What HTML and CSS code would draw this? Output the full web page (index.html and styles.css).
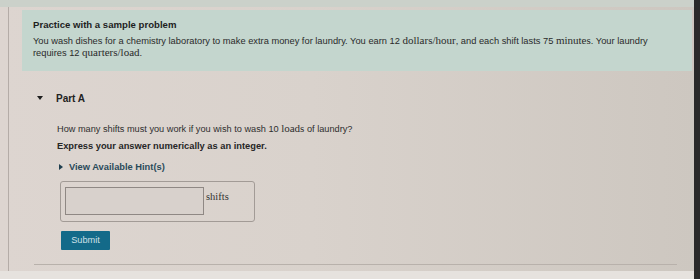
FILE: index.html
```html
<!DOCTYPE html>
<html>
<head>
<meta charset="utf-8">
<link rel="stylesheet" href="styles.css">
</head>
<body>
<div class="screen">
  <div class="topstrip"></div>
  <div class="page">
    <div class="intro">
      <div class="intro-title">Practice with a sample problem</div>
      <div class="intro-text">You wash dishes for a chemistry laboratory to make extra money for laundry. You earn 12 <span class="m">dollars/hour</span>, and each shift lasts 75 <span class="m">minutes</span>. Your laundry<br>requires 12 <span class="m">quarters/load</span>.</div>
    </div>
    <div class="part">
      <div class="part-head"><span class="caret-down"></span><span class="part-title">Part A</span></div>
      <div class="part-body">
        <p class="q">How many shifts must you work if you wish to wash 10 <span class="m">loads</span> of laundry?</p>
        <p class="instr">Express your answer numerically as an integer.</p>
        <div class="hint"><span class="caret-right"></span>View Available Hint(s)</div>
        <div class="answer">
          <div class="input"></div>
          <span class="unit">shifts</span>
        </div>
        <div class="submit">Submit</div>
      </div>
    </div>
    <div class="rule"></div>
  </div>
  <div class="bottomstrip"></div>
</div>
</body>
</html>
```
FILE: styles.css
```css
html, body {
  margin: 0;
  padding: 0;
  width: 700px;
  height: 279px;
  overflow: hidden;
  background: #2a2a2a;
  font-family: "Liberation Sans", Arial, sans-serif;
  color: #232323;
}
.screen {
  width: 694px;
  height: 279px;
  display: flex;
  flex-direction: column;
  background: linear-gradient(90deg, #ddd5d0 0%, #d9d2cc 45%, #cdc7c0 100%);
}
.topstrip {
  height: 7px;
  background: #cbd1ca;
  flex: none;
}
.page {
  flex: 1;
  margin-left: 8px;
  border-left: 1px solid #b4aca7;
  padding: 3px 2px 0 13px;
  display: flex;
  flex-direction: column;
}
.intro {
  background: #c4d6ce;
  height: 61px;
  box-sizing: border-box;
  padding: 9px 11px 0 11px;
}
.intro-title {
  font-weight: bold;
  font-size: 9.6px;
  line-height: 12px;
  color: #1e1e1e;
}
.intro-text {
  margin-top: 4px;
  font-size: 9.3px;
  line-height: 11px;
  color: #2a2a2a;
}
.m {
  font-family: "Liberation Serif", "Times New Roman", serif;
  font-size: 11px;
}
.part {
  padding-top: 20px;
}
.part-head {
  display: flex;
  align-items: center;
  height: 14px;
}
.caret-down {
  width: 0;
  height: 0;
  border-left: 3.5px solid transparent;
  border-right: 3.5px solid transparent;
  border-top: 4px solid #1e1e1e;
  margin-left: 15px;
  margin-right: 13px;
}
.part-title {
  font-weight: bold;
  font-size: 10px;
  color: #222;
}
.part-body {
  padding-left: 35px;
}
.q {
  margin: 17px 0 0 0;
  font-size: 9.2px;
  line-height: 12px;
  color: #2e2e2e;
}
.instr {
  margin: 5px 0 0 0;
  font-size: 9.3px;
  line-height: 12px;
  font-weight: bold;
  color: #262626;
}
.hint {
  margin-top: 9px;
  display: flex;
  align-items: center;
  font-size: 9.3px;
  line-height: 12px;
  font-weight: bold;
  color: #2a4a5a;
}
.caret-right {
  width: 0;
  height: 0;
  border-top: 3.5px solid transparent;
  border-bottom: 3.5px solid transparent;
  border-left: 4px solid #1f3f4f;
  margin: 0 6px 0 2px;
}
.answer {
  margin-top: 8px;
  margin-left: 3px;
  width: 195px;
  height: 41px;
  box-sizing: border-box;
  border: 1px solid #a29b96;
  border-radius: 3px;
  display: flex;
  align-items: flex-start;
  padding: 5px 0 0 4px;
}
.input {
  width: 139px;
  height: 28px;
  box-sizing: border-box;
  border: 1px solid #8f8884;
  background: #d8d1cc;
}
.unit {
  font-family: "Liberation Serif", "Times New Roman", serif;
  font-size: 10.5px;
  margin-left: 2px;
  margin-top: 4px;
  color: #333;
}
.submit {
  margin-top: 9px;
  margin-left: 4px;
  width: 49px;
  height: 19px;
  background: #136a89;
  border-radius: 1px;
  color: #cfe1e8;
  font-size: 9.2px;
  line-height: 19px;
  text-align: center;
}
.rule {
  margin-top: 14px;
  margin-left: 12px;
  margin-right: 15px;
  border-top: 1px solid #b8b1ab;
}
.bottomstrip {
  height: 8px;
  background: #e6e2de;
  flex: none;
}
```
